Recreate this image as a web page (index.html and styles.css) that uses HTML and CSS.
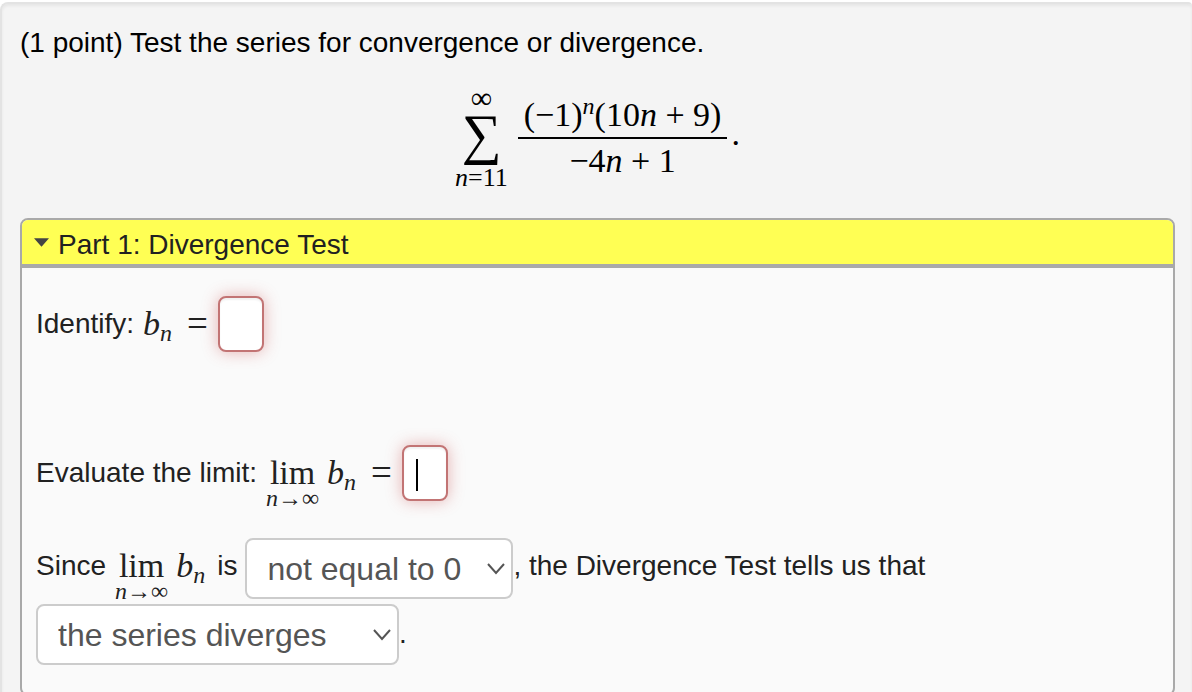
FILE: index.html
```html
<!DOCTYPE html>
<html lang="en">
<head>
<meta charset="utf-8">
<title>Series convergence</title>
<link rel="stylesheet" href="styles.css">
</head>
<body>
<main class="problem">
  <p class="prompt">(1 point) Test the series for convergence or divergence.</p>

  <div class="formula">
    <span class="sum">
      <span class="sum-limit infinity">∞</span>
      <span class="sum-sign">∑</span>
      <span class="sum-limit"><i>n</i>=11</span>
    </span>
    <span class="fraction">
      <span class="numerator">(−1)<sup><i>n</i></sup>(10<i>n</i> + 9)</span>
      <span class="denominator">−4<i>n</i> + 1</span>
    </span>
    <span class="period">.</span>
  </div>

  <details class="part" open>
    <summary class="part-title">
      <svg class="marker" viewBox="0 0 16 10" aria-hidden="true"><path d="M0 0H16L8 9Z"/></svg>
      Part 1: Divergence Test
    </summary>
    <div class="part-body">
      <div class="row">
        <label for="bn">Identify:</label>
        <span class="math"><i>b</i><sub><i>n</i></sub></span>
        <span class="math equals">=</span>
        <input class="answer" id="bn" type="text">
      </div>
      <div class="row row-limit">
        <label for="limit">Evaluate the limit:</label>
        <span class="math lim">lim<small><i>n</i>→∞</small></span>
        <span class="math"><i>b</i><sub><i>n</i></sub></span>
        <span class="math equals">=</span>
        <input class="answer answer-active" id="limit" type="text">
      </div>
      <div class="row row-since">
        <label for="compare">Since</label>
        <span class="math lim">lim<small><i>n</i>→∞</small></span>
        <span class="math"><i>b</i><sub><i>n</i></sub></span>
        <span class="is">is</span>
        <span class="picker">
          <select id="compare"><option>not equal to 0</option><option>equal to 0</option></select>
          <svg class="chevron" viewBox="0 0 18 12" aria-hidden="true"><path d="M1 1L9 10L17 1"/></svg>
        </span>
        <span>, the Divergence Test tells us that</span>
      </div>
      <div class="row row-result">
        <span class="picker picker-wide">
          <select aria-label="Conclusion"><option>the series diverges</option><option>the test is inconclusive</option></select>
          <svg class="chevron" viewBox="0 0 18 12" aria-hidden="true"><path d="M1 1L9 10L17 1"/></svg>
        </span>
        <span>.</span>
      </div>
    </div>
  </details>
</main>
</body>
</html>
```
FILE: styles.css
```css
* { box-sizing: border-box; }

html { background: #fff; }

body {
  height: 100vh;
  margin: 0;
  padding-top: 2px;
  overflow: hidden;
  font: 28px/40px "Liberation Sans", Arial, sans-serif;
  color: #212121;
}

.problem {
  padding: 19px 17px 0 18px;
  border: 2px solid #e3e3e3;
  border-width: 2px 0 0 2px;
  border-radius: 8px 4px 0 0;
  background: #f4f4f4;
  box-shadow: inset 0 2px 3px rgba(0, 0, 0, 0.06);
}

.prompt { margin: 0; color: #000; }

.formula {
  display: flex;
  justify-content: center;
  align-items: center;
  height: 96px;
  margin: 27px 0 32px;
  color: #000;
  font: 34px/44px "Liberation Serif", "Times New Roman", serif;
}

.sum {
  display: flex;
  flex-direction: column;
  align-items: center;
  margin-right: 10px;
}
.sum-limit { font-size: 26px; line-height: 24px; }
.infinity { font-size: 30px; }
.sum-sign { margin-bottom: 8px; font-size: 56px; line-height: 48px; }

.fraction { display: flex; flex-direction: column; align-items: center; }
.numerator { padding: 0 6px; border-bottom: 2px solid #000; }
.numerator sup { font-size: 24px; line-height: 0; }
.period { margin: 0 0 8px 4px; }

.part {
  min-height: 478px;
  border: 2px solid #a9a9a9;
  border-radius: 8px;
  background: #fafafa;
  overflow: hidden;
}
.part-title {
  display: flex;
  align-items: center;
  gap: 9px;
  height: 48px;
  padding: 6px 12px 0;
  border-bottom: 4px solid #a9a9a9;
  background: #ffff54;
  list-style: none;
  cursor: pointer;
}
.part-title::-webkit-details-marker { display: none; }
.marker { width: 15px; height: 10px; margin-bottom: 4px; fill: #444; }

.part-body { padding: 28px 14px; }

.row { display: flex; height: 56px; line-height: 56px; }
.row-limit { margin-top: 93px; }
.row-since { height: 60px; margin-top: 37px; }
.row-result { height: 60px; margin-top: 6px; line-height: 60px; }

.math {
  margin-left: 9px;
  font-family: "Liberation Serif", "Times New Roman", serif;
  font-size: 34px;
}
.math sub { font-size: 24px; line-height: 0; vertical-align: -6px; }
.equals { margin: 0 10px 0 15px; font-size: 37px; }

.lim {
  display: flex;
  flex-direction: column;
  align-items: center;
  padding-top: 12px;
  line-height: 32px;
}
.lim small { font-size: 24px; line-height: 18px; }
.lim + .math { margin-left: 8px; }
.is { margin: 0 8px 0 12px; }

.answer {
  width: 46px;
  height: 56px;
  padding: 0 12px;
  border: 2px solid #c27474;
  border-radius: 8px;
  outline: 0;
  background-color: #fff;
  box-shadow: inset 0 2px 2px rgba(0, 0, 0, 0.06), 0 0 16px rgba(200, 70, 70, 0.4);
  font: inherit;
}
.answer-active {
  background-image: linear-gradient(#000, #000);
  background-repeat: no-repeat;
  background-position: 12px 12px;
  background-size: 2px 32px;
}

.picker { position: relative; width: 268px; height: 60px; }
.picker-wide { width: 363px; }
.picker select {
  display: block;
  width: 100%;
  height: 61px;
  padding: 0 20px;
  border: 2px solid #ccc;
  border-radius: 8px;
  appearance: none;
  background: #fff;
  color: #555;
  font: 32px/40px "Liberation Sans", Arial, sans-serif;
}
.chevron {
  position: absolute;
  top: 25px;
  right: 8px;
  width: 18px;
  height: 12px;
  fill: none;
  stroke: #555;
  stroke-width: 2;
  pointer-events: none;
}
```
